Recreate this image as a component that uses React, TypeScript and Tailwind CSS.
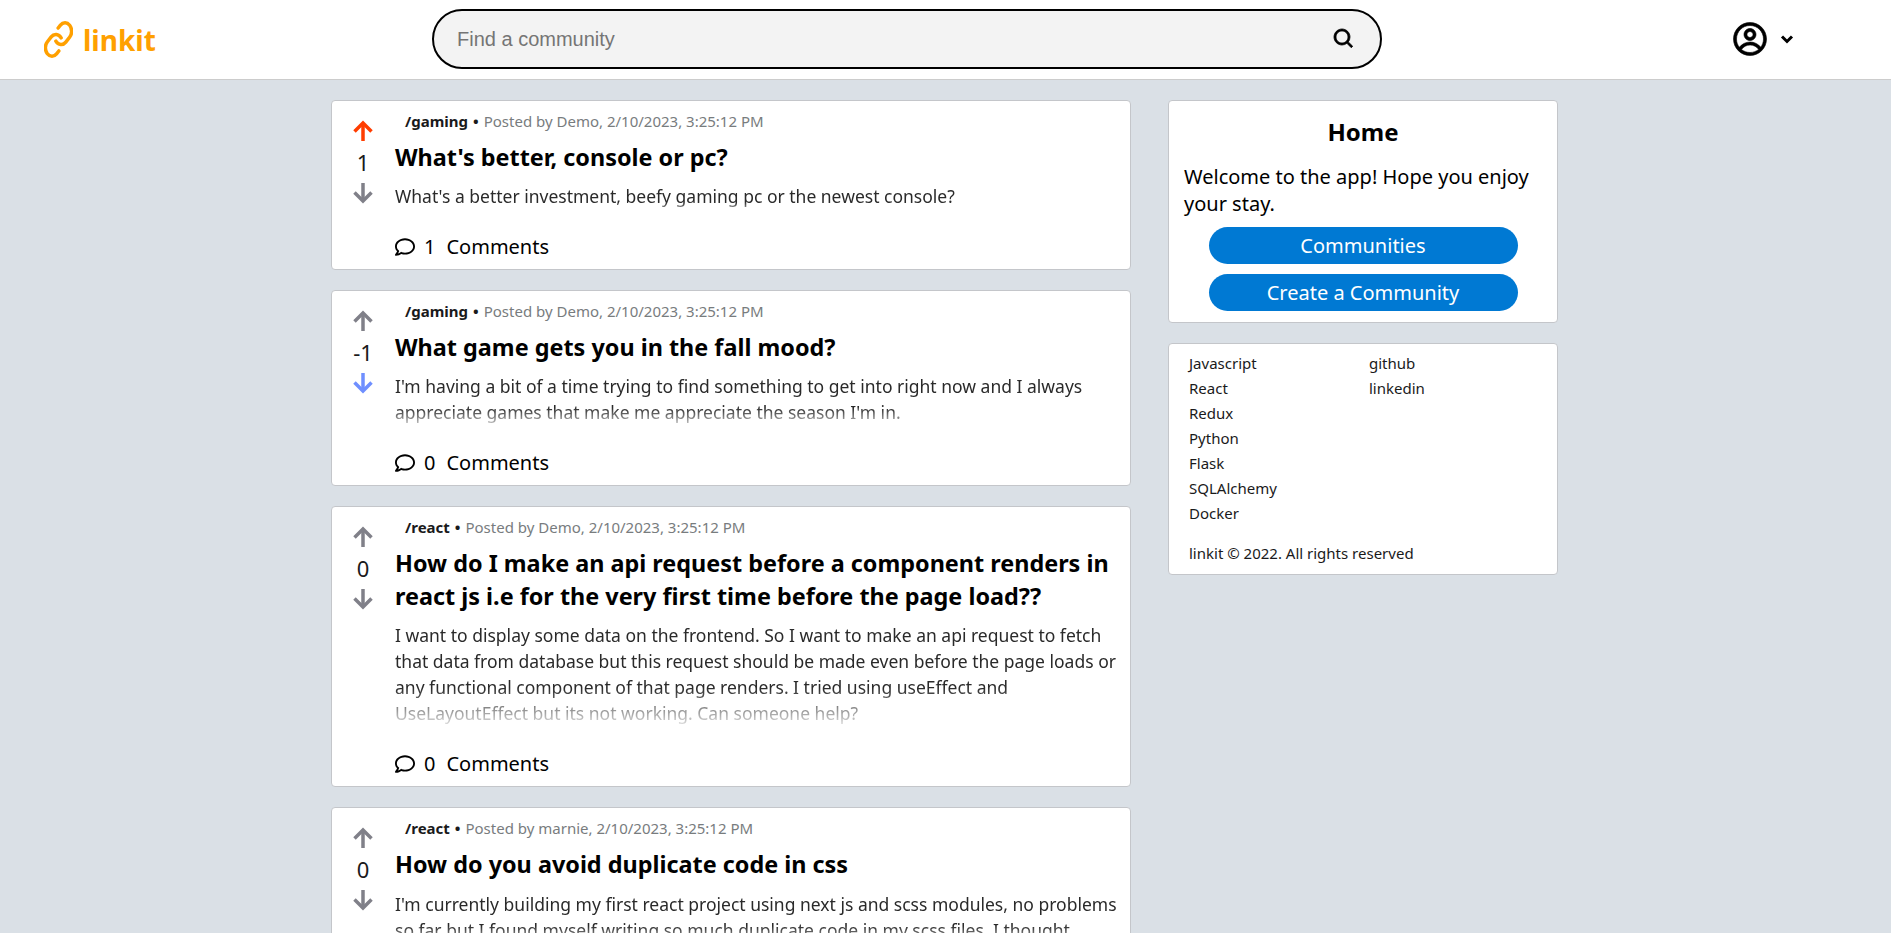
import { BiSearch } from "react-icons/bi";
import { CgProfile } from "react-icons/cg";
import { FaRegComment } from "react-icons/fa";

const font = { fontFamily: '"Noto Sans", sans-serif' };

type Post = {
  id: number;
  community: string;
  author: string;
  title: string;
  body: string[];
  score: number;
  comments: number;
  vote?: "up" | "down";
};

const posts: Post[] = [
  {
    id: 1,
    community: "/gaming",
    author: "Demo",
    title: "What's better, console or pc?",
    body: ["What's a better investment, beefy gaming pc or the newest console?"],
    score: 1,
    comments: 1,
    vote: "up",
  },
  {
    id: 2,
    community: "/gaming",
    author: "Demo",
    title: "What game gets you in the fall mood?",
    body: [
      "I'm having a bit of a time trying to find something to get into right now and I always",
      "appreciate games that make me appreciate the season I'm in.",
    ],
    score: -1,
    comments: 0,
    vote: "down",
  },
  {
    id: 3,
    community: "/react",
    author: "Demo",
    title: "How do I make an api request before a component renders in react js i.e for the very first time before the page load??",
    body: [
      "I want to display some data on the frontend. So I want to make an api request to fetch",
      "that data from database but this request should be made even before the page loads or",
      "any functional component of that page renders. I tried using useEffect and",
      "UseLayoutEffect but its not working. Can someone help?",
    ],
    score: 0,
    comments: 0,
  },
  {
    id: 4,
    community: "/react",
    author: "marnie",
    title: "How do you avoid duplicate code in css",
    body: [
      "I'm currently building my first react project using next js and scss modules, no problems",
      "so far but I found myself writing so much duplicate code in my scss files. I thought",
    ],
    score: 0,
    comments: 0,
  },
];

const tech = ["Javascript", "React", "Redux", "Python", "Flask", "SQLAlchemy", "Docker"];

function Arrow({ down, color }: { down?: boolean; color: string }) {
  return (
    <svg width="24" height="24" viewBox="0 0 24 24" fill="none" stroke={color} strokeWidth="3.5" className={down ? "rotate-180" : ""}>
      <path d="M12 22V4.500" />
      <path d="M3.500 12.500L12 4l8.500 8.500" />
    </svg>
  );
}

function PostCard({ post }: { post: Post }) {
  return (
    <div className="flex rounded-[4px] border border-[#c4c6ca] bg-white">
      <div className="flex w-[63px] shrink-0 flex-col items-center pt-[18px] pr-[1px]">
        <Arrow color={post.vote === "up" ? "#ff3d00" : "#808089"} />
        <span className="text-[22px] leading-[38px] text-[#1a1a1b]">{post.score}</span>
        <Arrow down color={post.vote === "down" ? "#6f8fff" : "#808089"} />
      </div>
      <div className="min-w-0 flex-1 pr-[12px] pt-[9px]">
        <div className="ml-[10px] text-[15px] leading-[22px] text-[#787c7e]">
          <span className="font-bold text-[#1a1a1b]">{post.community}</span>
          <span className="mx-[5px] font-bold text-[#1a1a1b]">•</span>
          Posted by {post.author}, 2/10/2023, 3:25:12 PM
        </div>
        <h2 className="mt-[9px] text-[23.4px] leading-[32.7px] font-bold text-black">{post.title}</h2>
        <div className="mt-[9.5px] pb-[6px] text-[17.5px] leading-[26px] text-[#2a2a2a] [mask-image:linear-gradient(180deg,#000_60%,transparent_100%)]">
          {post.body.map((line) => (
            <div key={line}>{line}</div>
          ))}
        </div>
        <div className="mt-[17px] mb-[7px] flex items-center text-[20px] leading-[30px] text-black">
          <FaRegComment size={20} />
          <span className="ml-[9px]">{post.comments}</span>
          <span className="ml-[11px]">Comments</span>
        </div>
      </div>
    </div>
  );
}

export default function App() {
  return (
    <div style={font} className="h-[933px] overflow-hidden bg-[#dae0e6]">
      <header className="flex h-[80px] items-center border-b border-[#ccc] bg-white">
        <div className="ml-[44px] flex w-[388px] items-center text-[#ffa000]">
          <svg width="29" height="37" viewBox="1 1 22 22" preserveAspectRatio="none" fill="none" stroke="currentColor" strokeLinecap="round">
            <path vectorEffect="non-scaling-stroke" strokeWidth="3.5" d="M10 13a5 5 0 0 0 7.540.540l3-3a5 5 0 0 0-7.070-7.070l-1.720 1.710" />
            <path vectorEffect="non-scaling-stroke" strokeWidth="3.5" d="M14 11a5 5 0 0 0-7.540-.540l-3 3a5 5 0 0 0 7.070 7.070l1.710-1.710" />
          </svg>
          <span className="ml-[10px] text-[28px] font-bold">linkit</span>
        </div>
        <div className="-mt-[1px] flex h-[60px] w-[950px] items-center justify-between rounded-[30px] border-2 border-black bg-[#f3f3f3] pr-[24px] pl-[23px]">
          <span className="text-[20px] text-[#757575] [font-family:'Liberation_Sans',sans-serif]">Find a community</span>
          <BiSearch size={24} strokeWidth={0.8} color="black" />
        </div>
        <div className="-mt-[1px] ml-[350px] flex items-center">
          <CgProfile size={36} strokeWidth={0.4} color="black" />
          <svg className="ml-[12px]" width="14" height="14" viewBox="0 0 14 14" fill="none" stroke="black" strokeWidth="3">
            <path d="M2 4.500l5 5 5-5" />
          </svg>
        </div>
      </header>
      <main className="ml-[331px] mt-[20px] flex items-start gap-[37px]">
        <div className="flex w-[800px] flex-col gap-[20px]">
          {posts.map((post) => (
            <PostCard key={post.id} post={post} />
          ))}
        </div>
        <aside className="flex w-[390px] flex-col gap-[20px]">
          <div className="rounded-[4px] border border-[#c4c6ca] bg-white px-[15px] pb-[11px]">
            <h2 className="pt-[13px] text-center text-[24px] leading-[36px] font-bold text-black">Home</h2>
            <p className="mt-[13px] text-[20px] leading-[27px] text-black">Welcome to the app! Hope you enjoy your stay.</p>
            <div className="mt-[10px] flex flex-col items-center gap-[10px]">
              <div className="h-[37px] w-[309px] rounded-full bg-[#0079d3] text-center text-[20px] leading-[37px] text-white">Communities</div>
              <div className="h-[37px] w-[309px] rounded-full bg-[#0079d3] text-center text-[20px] leading-[37px] text-white">Create a Community</div>
            </div>
          </div>
          <div className="rounded-[4px] border border-[#c4c6ca] bg-white px-[20px] pt-[7px] pb-[8px] text-[15px] text-[#1a1a1b]">
            <div className="flex">
              <div className="w-[180px]">
                {tech.map((t) => (
                  <div key={t} className="leading-[25px]">{t}</div>
                ))}
              </div>
              <div>
                <div className="leading-[25px]">github</div>
                <div className="leading-[25px]">linkedin</div>
              </div>
            </div>
            <div className="mt-[15px] leading-[25px]">linkit © 2022. All rights reserved</div>
          </div>
        </aside>
      </main>
    </div>
  );
}
